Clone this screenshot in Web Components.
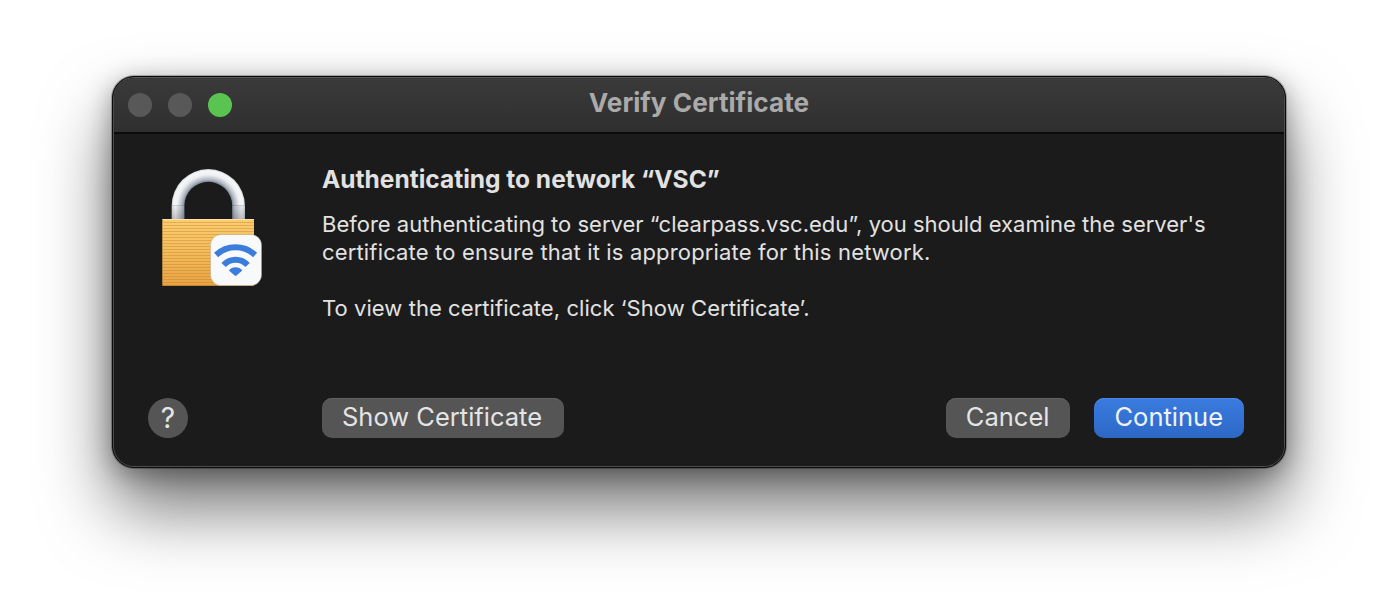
<!DOCTYPE html>
<html lang="en">
<head>
<meta charset="utf-8">
<title>Verify Certificate</title>
<style>
    html, body { margin: 0; height: 616px; overflow: hidden; background: #fff; }
    body { padding: 76px 112px 0; box-sizing: border-box; font-family: Inter, "Liberation Sans", sans-serif; }
    .wide { letter-spacing: .16px; }
    .tight { letter-spacing: .06px; }
    mac-button[slot="left"] { padding-right: 22px; }
</style>
</head>
<body>
<cert-dialog heading="Verify Certificate">
    <lock-icon slot="icon"></lock-icon>
    <span slot="title">Authenticating to network “VSC”</span>
    <p>Before authenticating to server “clearpass.vsc.edu”, you should examine the server's<br><span class="wide">certificate to ensure that it is appropriate for this network.</span></p>
    <p class="tight">To view the certificate, click ‘Show Certificate’.</p>
    <help-button slot="help"></help-button>
    <mac-button slot="left">Show Certificate</mac-button>
    <mac-button slot="right">Cancel</mac-button>
    <mac-button slot="right" primary>Continue</mac-button>
</cert-dialog>

<script>
class CertDialog extends HTMLElement {
    constructor() {
        super();
        this.shadow = this.attachShadow({ mode: 'open' });
        this.shadow.innerHTML = `
            <style>
                :host {
                    display: block;
                    width: 1174px;
                    height: 392px;
                    box-sizing: border-box;
                    border-radius: 22px;
                    background: #1b1b1b;
                    color: #e2e2e2;
                    overflow: hidden;
                    border: 1px solid #0c0c0c;
                    box-shadow: 0 0 0 1px rgba(0,0,0,.25), 0 40px 70px rgba(0,0,0,.55), 0 6px 26px rgba(0,0,0,.35);
                }
                .frame {
                    height: 100%;
                    box-sizing: border-box;
                    border: 1px solid #4c4c4c;
                    border-top-color: #555;
                    border-radius: 21px;
                    display: flex;
                    flex-direction: column;
                }
                .titlebar {
                    height: 54px;
                    flex: none;
                    display: grid;
                    grid-template-columns: 1fr auto 1fr;
                    align-items: center;
                    padding: 0 14px;
                    background: linear-gradient(#3a3a3a, #2f2f2f);
                    border-bottom: 2px solid #0a0a0a;
                    border-radius: 20px 20px 0 0;
                }
                .lights { display: flex; gap: 16px; }
                .lights i { width: 24px; height: 24px; border-radius: 50%; background: #585858; }
                .lights i.on { background: #5ac451; }
                h1 {
                    margin: -6px 0 0;
                    font-size: 26.2px;
                    font-weight: 700;
                    color: #aaa;
                }
                .main {
                    flex: 1;
                    display: grid;
                    grid-template-columns: 208px 1fr;
                    min-height: 0;
                }
                .icon { padding: 35px 0 0 48px; }
                .text { padding-top: 29px; font-size: 22px; line-height: 28px; }
                .title { font-weight: 700; font-size: 24.5px; line-height: 32px; margin-bottom: 15px; }
                ::slotted(p) { margin: 0 0 28px; }
                .footer {
                    flex: none;
                    height: 68px;
                    display: grid;
                    grid-template-columns: 208px auto 1fr;
                    padding: 0;
                }
                .help { padding-left: 34px; }
                .right { display: flex; justify-content: flex-end; gap: 24px; padding-right: 40px; }
            </style>
            <div class="frame">
                <div class="titlebar">
                    <div class="lights"><i></i><i></i><i class="on"></i></div>
                    <h1></h1>
                    <div></div>
                </div>
                <div class="main">
                    <div class="icon"><slot name="icon"></slot></div>
                    <div class="text">
                        <div class="title"><slot name="title"></slot></div>
                        <slot></slot>
                    </div>
                </div>
                <div class="footer">
                    <div class="help"><slot name="help"></slot></div>
                    <div><slot name="left"></slot></div>
                    <div class="right"><slot name="right"></slot></div>
                </div>
            </div>
        `;
    }

    connectedCallback() {
        this.shadow.querySelector('h1').textContent = this.getAttribute('heading');
    }
}

class LockIcon extends HTMLElement {
    constructor() {
        super();
        this.shadow = this.attachShadow({ mode: 'open' });
        this.shadow.innerHTML = `
            <style>
                :host { display: block; width: 100px; height: 117px; }
                svg { display: block; }
            </style>
            <svg width="100" height="117" viewBox="162 169 100 117" xmlns="http://www.w3.org/2000/svg">
                <defs>
                    <radialGradient id="arc" gradientUnits="userSpaceOnUse" cx="208.3" cy="205.7" r="36.7">
                        <stop offset=".65" stop-color="#7d8896"/>
                        <stop offset=".72" stop-color="#b4bbc4"/>
                        <stop offset=".84" stop-color="#eef0f2"/>
                        <stop offset=".94" stop-color="#f6f7f8"/>
                        <stop offset="1" stop-color="#d2d5d9"/>
                    </radialGradient>
                    <linearGradient id="sideL" gradientUnits="userSpaceOnUse" x1="171.7" x2="184.4" y1="0" y2="0">
                        <stop offset="0" stop-color="#d6d9dc"/>
                        <stop offset=".3" stop-color="#f0f1f3"/>
                        <stop offset=".75" stop-color="#bbc1c9"/>
                        <stop offset="1" stop-color="#8d96a3"/>
                    </linearGradient>
                    <linearGradient id="sideR" gradientUnits="userSpaceOnUse" x1="245" x2="232.3" y1="0" y2="0">
                        <stop offset="0" stop-color="#d6d9dc"/>
                        <stop offset=".3" stop-color="#e8eaec"/>
                        <stop offset=".75" stop-color="#bbc1c9"/>
                        <stop offset="1" stop-color="#8d96a3"/>
                    </linearGradient>
                    <linearGradient id="sideShade" x1="0" x2="0" y1="0" y2="1">
                        <stop offset="0" stop-color="#000" stop-opacity="0"/>
                        <stop offset="1" stop-color="#000" stop-opacity=".2"/>
                    </linearGradient>
                    <linearGradient id="brass" x1="0" x2="0" y1="0" y2="1">
                        <stop offset="0" stop-color="#fbcd70"/>
                        <stop offset=".5" stop-color="#f4bc5c"/>
                        <stop offset="1" stop-color="#e8a344"/>
                    </linearGradient>
                    <pattern id="stripes" width="4" height="3" patternUnits="userSpaceOnUse">
                        <rect width="4" height="1" fill="#b8741c" fill-opacity=".34"/>
                    </pattern>
                </defs>
                <path d="M171.7 205.7a36.6 36.6 0 0 1 73.2 0h-12.7a23.9 23.9 0 0 0-47.8 0z" fill="url(#arc)"/>
                <rect x="171.7" y="205.7" width="12.7" height="14" fill="url(#sideL)"/>
                <rect x="232.2" y="205.7" width="12.7" height="14" fill="url(#sideR)"/>
                <rect x="171.7" y="205.7" width="12.7" height="14" fill="url(#sideShade)"/>
                <rect x="232.2" y="205.7" width="12.7" height="14" fill="url(#sideShade)"/>
                <rect x="162.3" y="219" width="91.7" height="67" rx="2" fill="url(#brass)"/>
                <rect x="162.3" y="219" width="91.7" height="67" rx="2" fill="url(#stripes)"/>
                <rect x="162.3" y="219" width="91.7" height="1" fill="#ffe2a4"/>
                <rect x="162.3" y="285" width="91.7" height="1" fill="#bd8438"/>
                <rect x="210.4" y="234.4" width="51.2" height="51.2" rx="11" fill="#f8f9fb" stroke="#a98d66" stroke-opacity=".5" stroke-width=".8"/>
                <g fill="none" stroke="#3b7ddc" stroke-width="6">
                    <path d="M216.1 255a28.7 28.7 0 0 1 39 0"/>
                    <path d="M223.6 265a16.3 16.3 0 0 1 24 0"/>
                </g>
                <path d="M228.9 270.5a8.7 8.7 0 0 1 13.4 0l-5.8 5q-.9.8-1.8 0z" fill="#3b7ddc"/>
            </svg>
        `;
    }
}

class HelpButton extends HTMLElement {
    constructor() {
        super();
        this.shadow = this.attachShadow({ mode: 'open' });
        this.shadow.innerHTML = `
            <style>
                :host {
                    display: flex;
                    width: 40px;
                    height: 40px;
                    align-items: center;
                    justify-content: center;
                    border-radius: 50%;
                    background: #555;
                    color: #e6e6e6;
                    font-size: 28px;
                    font-weight: 400;
                }
            </style>
            <span>?</span>
        `;
    }
}

class MacButton extends HTMLElement {
    constructor() {
        super();
        this.shadow = this.attachShadow({ mode: 'open' });
        this.shadow.innerHTML = `
            <style>
                :host {
                    display: inline-flex;
                    height: 40px;
                    box-sizing: border-box;
                    align-items: center;
                    padding: 0 21px 4px 20px;
                    border-radius: 10px;
                    background: #555;
                    box-shadow: inset 0 1px 0 #626262;
                    color: #e4e4e4;
                    font-size: 25.5px;
                    white-space: nowrap;
                }
                :host([primary]) {
                    background: linear-gradient(#3a7ce0, #2d68c6);
                    box-shadow: inset 0 1px 0 #4a88e4;
                    color: #eef3fb;
                }
            </style>
            <slot></slot>
        `;
    }
}

customElements.define('cert-dialog', CertDialog);
customElements.define('lock-icon', LockIcon);
customElements.define('help-button', HelpButton);
customElements.define('mac-button', MacButton);
</script>
</body>
</html>
